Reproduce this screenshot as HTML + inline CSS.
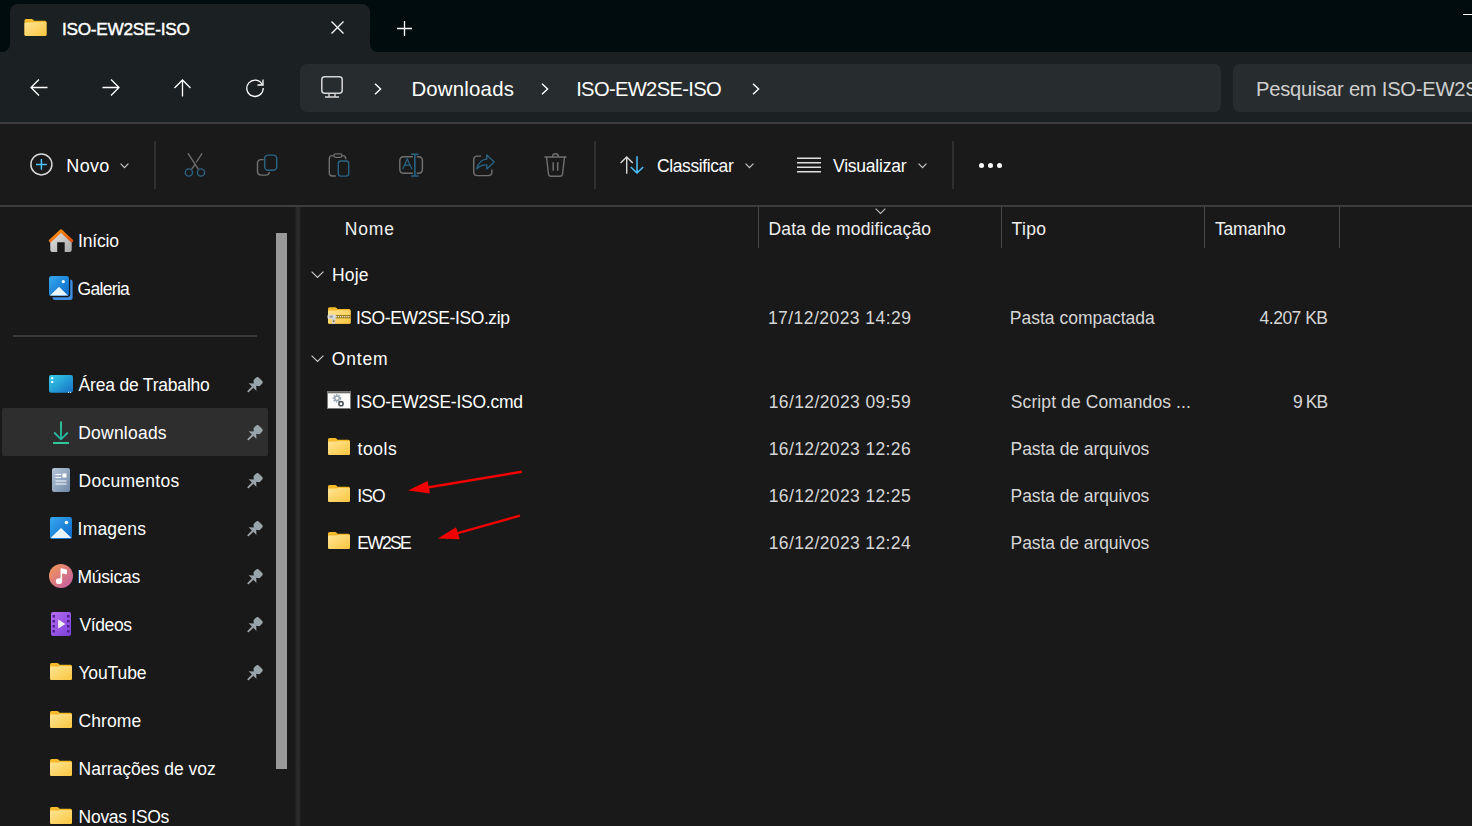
<!DOCTYPE html>
<html><head><meta charset="utf-8">
<style>
*{margin:0;padding:0;box-sizing:border-box}
html,body{width:1472px;height:826px;overflow:hidden;background:#191919;font-family:"Liberation Sans",sans-serif;color:#fff}
.a{position:absolute}
.t{position:absolute;white-space:nowrap;line-height:1}
svg{position:absolute;overflow:visible}
</style></head><body>
<svg width="0" height="0" style="left:0;top:0"><defs>
<linearGradient id="fb" x1="0" y1="0" x2="1" y2="1"><stop offset="0" stop-color="#ffe595"/><stop offset="1" stop-color="#f9c53f"/></linearGradient>
<linearGradient id="fk" x1="0" y1="0" x2="0" y2="1"><stop offset="0" stop-color="#f7bd2a"/><stop offset="1" stop-color="#eaa515"/></linearGradient>
<linearGradient id="gal" x1="0" y1="0" x2="1" y2="1"><stop offset="0" stop-color="#36a9f0"/><stop offset="1" stop-color="#0a67c4"/></linearGradient>
<linearGradient id="desk" x1="0" y1="0" x2="1" y2="1"><stop offset="0" stop-color="#35cfe6"/><stop offset="1" stop-color="#1670c6"/></linearGradient>
<linearGradient id="dl" x1="0" y1="0" x2="0" y2="1"><stop offset="0" stop-color="#2fd0a0"/><stop offset="1" stop-color="#1fb5a0"/></linearGradient>
<linearGradient id="doc" x1="0" y1="0" x2="1" y2="1"><stop offset="0" stop-color="#b6c7da"/><stop offset="1" stop-color="#6f87a6"/></linearGradient>
<linearGradient id="mus" x1="0" y1="0" x2="1" y2="1"><stop offset="0" stop-color="#f79a55"/><stop offset="1" stop-color="#c05aa8"/></linearGradient>
<linearGradient id="vid" x1="0" y1="0" x2="1" y2="1"><stop offset="0" stop-color="#b76ef0"/><stop offset="1" stop-color="#7b3ed8"/></linearGradient>
<linearGradient id="home" x1="0" y1="0" x2="1" y2="1"><stop offset="0" stop-color="#e6e6e6"/><stop offset="1" stop-color="#a9a9a9"/></linearGradient>
<linearGradient id="roof" x1="0" y1="0" x2="1" y2="1"><stop offset="0" stop-color="#ff9a10"/><stop offset="1" stop-color="#e0500a"/></linearGradient>
</defs></svg>

<div class="a" style="left:0px;top:0px;width:1472px;height:52px;background:#010c0f;border-radius:0px;"></div>
<div class="a" style="left:10px;top:4px;width:360px;height:60px;background:#1b2022;border-radius:8px;border-bottom-left-radius:0;border-bottom-right-radius:0"></div>
<div class="a" style="left:2px;top:44px;width:8px;height:8px;background:#1b2022"></div>
<div class="a" style="left:-6px;top:36px;width:16px;height:16px;background:#010c0f;border-radius:8px"></div>
<div class="a" style="left:370px;top:44px;width:8px;height:8px;background:#1b2022"></div>
<div class="a" style="left:370px;top:36px;width:16px;height:16px;background:#010c0f;border-radius:8px"></div>
<div class="a" style="left:0px;top:52px;width:1472px;height:70px;background:#1b2022;border-radius:0px;"></div>
<div class="a" style="left:0px;top:122px;width:1472px;height:2px;background:#3d3d3d;border-radius:0px;"></div>
<div class="a" style="left:0px;top:124px;width:1472px;height:81px;background:#1a1a1a;border-radius:0px;"></div>
<div class="a" style="left:0px;top:205px;width:1472px;height:2px;background:#3d3d3d;border-radius:0px;"></div>
<div class="a" style="left:300px;top:64px;width:921px;height:48px;background:#272c2e;border-radius:7px;"></div>
<div class="a" style="left:1233px;top:64px;width:260px;height:48px;background:#272c2e;border-radius:7px;"></div>
<div class="a" style="left:1463px;top:13.9px;width:9px;height:1.2px;background:#ffffff;border-radius:0px;"></div>
<svg style="left:24px;top:19px" width="23" height="17" viewBox="0 0 22 17"><path d="M0,1.6 Q0,0 1.6,0 H7.2 Q8,0 8.6,0.7 L9.6,1.8 H20.4 Q22,1.8 22,3.4 V15.4 Q22,17 20.4,17 H1.6 Q0,17 0,15.4 Z" fill="url(#fk)"/><path d="M0,4.6 Q0,3.4 1.2,3.4 H8.4 L9.8,3.1 H20.8 Q22,3.1 22,4.3 V15.6 Q22,17 20.6,17 H1.4 Q0,17 0,15.6 Z" fill="url(#fb)"/></svg>
<div class="t" id="tab" style="left:62.00px;top:21.04px;font-size:17.2px;color:#fff;font-weight:normal;-webkit-text-stroke:0.45px #fff;letter-spacing:-0.250px">ISO-EW2SE-ISO</div>
<svg style="left:331px;top:21px" width="13" height="13" viewBox="0 0 13 13"><path d="M0.5,0.5 L12.5,12.5 M12.5,0.5 L0.5,12.5" stroke="#fff" stroke-width="1.3"/></svg>
<svg style="left:397px;top:21px" width="15" height="15" viewBox="0 0 15 15"><path d="M7.5,0 V15 M0,7.5 H15" stroke="#fff" stroke-width="1.3"/></svg>
<svg style="left:30px;top:79px" width="18" height="17" viewBox="0 0 18 17"><path d="M17.5,8.5 H1 M9,0.5 L1,8.5 L9,16.5" stroke="#fff" stroke-width="1.3" fill="none"/></svg>
<svg style="left:102px;top:79px" width="18" height="17" viewBox="0 0 18 17"><path d="M0.5,8.5 H17 M9,0.5 L17,8.5 L9,16.5" stroke="#fff" stroke-width="1.3" fill="none"/></svg>
<svg style="left:174px;top:79px" width="17" height="18" viewBox="0 0 17 18"><path d="M8.5,17.5 V1 M0.5,9 L8.5,1 L16.5,9" stroke="#fff" stroke-width="1.3" fill="none"/></svg>
<svg style="left:246px;top:79px" width="18" height="18" viewBox="0 0 18 18"><path d="M16.3,5.5 A8.2,8.2 0 1 0 17.2,9" stroke="#fff" stroke-width="1.3" fill="none"/><path d="M17,0.5 V6 H11.5" stroke="#fff" stroke-width="1.3" fill="none"/></svg>
<svg style="left:321px;top:76px" width="22" height="22" viewBox="0 0 22 22"><rect x="0.8" y="0.8" width="20.4" height="16.4" rx="3" stroke="#d6d6d6" stroke-width="1.5" fill="none"/><path d="M8,17 V20.5 M14,17 V20.5 M4,21 H18" stroke="#d6d6d6" stroke-width="1.4" fill="none"/></svg>
<svg style="left:374px;top:83px" width="8" height="12" viewBox="0 0 8 12"><path d="M1,0.7 L6.6,6 L1,11.3" stroke="#fff" stroke-width="1.4" fill="none"/></svg>
<svg style="left:540.5px;top:83px" width="8" height="12" viewBox="0 0 8 12"><path d="M1,0.7 L6.6,6 L1,11.3" stroke="#fff" stroke-width="1.4" fill="none"/></svg>
<svg style="left:751.5px;top:83px" width="8" height="12" viewBox="0 0 8 12"><path d="M1,0.7 L6.6,6 L1,11.3" stroke="#fff" stroke-width="1.4" fill="none"/></svg>
<div class="t" id="bc1" style="left:411.40px;top:78.73px;font-size:20.4px;color:#fff;font-weight:normal;letter-spacing:0.200px">Downloads</div>
<div class="t" id="bc2" style="left:576.20px;top:78.90px;font-size:20.2px;color:#fff;font-weight:normal;letter-spacing:-0.683px">ISO-EW2SE-ISO</div>
<div class="t" id="srch" style="left:1256.00px;top:78.90px;font-size:20.2px;color:#d0d0d0;font-weight:normal;letter-spacing:-0.250px">Pesquisar em ISO-EW2SE-ISO</div>
<svg style="left:30px;top:153px" width="23" height="23" viewBox="0 0 23 23"><circle cx="11.4" cy="11.4" r="10.5" stroke="#d8d8d8" stroke-width="1.5" fill="none"/><path d="M11.4,6 V16.8 M6,11.4 H16.8" stroke="#4cc2ff" stroke-width="1.5"/></svg>
<div class="t" id="novo" style="left:66.30px;top:156.76px;font-size:18px;color:#fff;font-weight:normal;letter-spacing:0.333px">Novo</div>
<svg style="left:119.5px;top:162.5px" width="9" height="6" viewBox="0 0 9 6"><path d="M0.6,0.6 L4.5,4.6 L8.4,0.6" stroke="#c8c8c8" stroke-width="1.2" fill="none"/></svg>
<div class="a" style="left:154px;top:141px;width:2px;height:48px;background:#2f2f2f;border-radius:0px;"></div>
<svg style="left:185px;top:153px" width="22" height="24" viewBox="0 0 22 24"><path d="M3.2,0.6 L13.1,15.8 M16.8,0.8 L11.4,9 M10.2,11.2 L6.9,15.8" stroke="#707070" stroke-width="1.35" fill="none" stroke-linecap="round"/><circle cx="3.9" cy="19.5" r="3.6" stroke="#2a6485" stroke-width="1.4" fill="none"/><circle cx="16" cy="19.5" r="3.6" stroke="#2a6485" stroke-width="1.4" fill="none"/></svg>
<svg style="left:257px;top:154px" width="22" height="22" viewBox="0 0 22 22"><path d="M6.6,5.6 H4.2 Q0.5,5.6 0.5,9.3 V17.6 Q0.5,21.1 4.2,21.1 H8.6 Q12.3,21.1 12.3,18" stroke="#707070" stroke-width="1.45" fill="none"/><rect x="7.7" y="1.1" width="12" height="15.1" rx="3.4" stroke="#2a6485" stroke-width="1.45" fill="none"/></svg>
<svg style="left:328px;top:153px" width="22" height="24" viewBox="0 0 22 24"><path d="M7.8,23 H4.3 Q1.3,23 1.3,20 V5.6 Q1.3,2.6 4.3,2.6 H5.8 M14,2.6 H14.7 Q17.7,2.6 17.7,5.6 V6.3" stroke="#707070" stroke-width="1.4" fill="none"/><rect x="5.8" y="0.8" width="8.2" height="3.6" rx="1.8" stroke="#707070" stroke-width="1.3" fill="none"/><rect x="10.3" y="8" width="10.4" height="15.1" rx="2.6" stroke="#2a6485" stroke-width="1.4" fill="none"/></svg>
<svg style="left:399px;top:153px" width="25" height="24" viewBox="0 0 25 24"><path d="M13.9,3.8 H4.8 Q0.8,3.8 0.8,7.8 V16.2 Q0.8,20.2 4.8,20.2 H13.9 M17.8,3.8 H19.4 Q23.4,3.8 23.4,7.8 V16.2 Q23.4,20.2 19.4,20.2 H17.8" stroke="#707070" stroke-width="1.45" fill="none"/><path d="M3.6,16.2 L8.3,6 L13,16.2 M5.4,12.2 H11.2" stroke="#2a6485" stroke-width="1.25" fill="none"/><path d="M15.8,1.2 V23 M12.1,1.3 H19.5 M12.1,23 H19.5" stroke="#2a6485" stroke-width="1.6" fill="none"/></svg>
<svg style="left:473px;top:153px" width="22" height="24" viewBox="0 0 22 24"><path d="M8.2,3.1 H4.6 Q0.7,3.1 0.7,7 V18.7 Q0.7,22.6 4.6,22.6 H15 Q18.9,22.6 18.9,18.7 V16.4" stroke="#707070" stroke-width="1.45" fill="none"/><path d="M3.9,15.8 Q5.8,7 13.7,6.2 V2 L21.2,9 L13.8,15.9 V11.9 Q8.2,11.5 3.9,15.8 Z" stroke="#2a6485" stroke-width="1.35" fill="none" stroke-linejoin="round"/></svg>
<svg style="left:543.6px;top:153px" width="23" height="24" viewBox="0 0 23 24"><path d="M0.5,4 H22.5 M8.5,4 Q8.5,0.7 11.5,0.7 Q14.5,0.7 14.5,4" stroke="#707070" stroke-width="1.4" fill="none"/><path d="M2.5,4 L4.5,21 Q4.8,23.3 7,23.3 H16 Q18.2,23.3 18.5,21 L20.5,4" stroke="#707070" stroke-width="1.4" fill="none"/><path d="M9.2,9.3 V17.7 M13.7,9.3 V17.7" stroke="#707070" stroke-width="1.5"/></svg>
<div class="a" style="left:594px;top:141px;width:2px;height:48px;background:#2f2f2f;border-radius:0px;"></div>
<svg style="left:620px;top:155px" width="24" height="19" viewBox="0 0 24 19"><path d="M6.7,18.8 V2.2 M0.6,8 L6.7,1.9 L12.8,8" stroke="#d8d8d8" stroke-width="1.4" fill="none"/><path d="M17,1.3 V17.8 M10.8,12 L17,18 L23.2,12" stroke="#4cc2ff" stroke-width="1.5" fill="none"/></svg>
<div class="t" id="cls" style="left:657.00px;top:157.79px;font-size:17.5px;color:#fff;font-weight:normal;letter-spacing:-0.400px">Classificar</div>
<svg style="left:744.5px;top:162.5px" width="9" height="6" viewBox="0 0 9 6"><path d="M0.6,0.6 L4.5,4.6 L8.4,0.6" stroke="#c8c8c8" stroke-width="1.2" fill="none"/></svg>
<svg style="left:797px;top:157px" width="24" height="16" viewBox="0 0 24 16"><path d="M0,1.3 H24 M0,5.8 H24 M0,10.3 H24 M0,14.8 H24" stroke="#e0e0e0" stroke-width="1.4"/></svg>
<div class="t" id="vis" style="left:833.00px;top:157.79px;font-size:17.5px;color:#fff;font-weight:normal;letter-spacing:-0.222px">Visualizar</div>
<svg style="left:917.5px;top:162.5px" width="9" height="6" viewBox="0 0 9 6"><path d="M0.6,0.6 L4.5,4.6 L8.4,0.6" stroke="#c8c8c8" stroke-width="1.2" fill="none"/></svg>
<div class="a" style="left:952px;top:141px;width:2px;height:48px;background:#2f2f2f;border-radius:0px;"></div>
<div class="a" style="left:978.5px;top:163.3px;width:5px;height:5px;border-radius:3px;background:#fff"></div>
<div class="a" style="left:987.5px;top:163.3px;width:5px;height:5px;border-radius:3px;background:#fff"></div>
<div class="a" style="left:996.5px;top:163.3px;width:5px;height:5px;border-radius:3px;background:#fff"></div>
<div class="t" id="h_nome" style="left:344.70px;top:221.19px;font-size:17.5px;color:#f0f0f0;font-weight:normal;letter-spacing:0.866px">Nome</div>
<div class="t" id="h_data" style="left:768.50px;top:221.19px;font-size:17.5px;color:#f0f0f0;font-weight:normal;letter-spacing:0.167px">Data de modificação</div>
<div class="t" id="h_tipo" style="left:1011.60px;top:221.19px;font-size:17.5px;color:#f0f0f0;font-weight:normal;letter-spacing:0.333px">Tipo</div>
<div class="t" id="h_tam" style="left:1215.00px;top:221.19px;font-size:17.5px;color:#f0f0f0;font-weight:normal;letter-spacing:-0.201px">Tamanho</div>
<div class="a" style="left:758px;top:207px;width:1px;height:41px;background:#4a4a4a;border-radius:0px;"></div>
<div class="a" style="left:1001px;top:207px;width:1px;height:41px;background:#4a4a4a;border-radius:0px;"></div>
<div class="a" style="left:1204px;top:207px;width:1px;height:41px;background:#4a4a4a;border-radius:0px;"></div>
<div class="a" style="left:1339px;top:207px;width:1px;height:41px;background:#4a4a4a;border-radius:0px;"></div>
<svg style="left:875px;top:208px" width="11" height="6" viewBox="0 0 11 6"><path d="M0.6,0.6 L5.5,5.4 L10.4,0.6" stroke="#bdbdbd" stroke-width="1.1" fill="none"/></svg>
<svg style="left:311px;top:270.5px" width="13" height="7" viewBox="0 0 13 7"><path d="M0.6,0.6 L6.5,6.4 L12.4,0.6" stroke="#c8c8c8" stroke-width="1.2" fill="none"/></svg>
<div class="t" id="g_hoje" style="left:332.00px;top:266.69px;font-size:17.5px;color:#fff;font-weight:normal;letter-spacing:0.199px">Hoje</div>
<svg style="left:311px;top:354.5px" width="13" height="7" viewBox="0 0 13 7"><path d="M0.6,0.6 L6.5,6.4 L12.4,0.6" stroke="#c8c8c8" stroke-width="1.2" fill="none"/></svg>
<div class="t" id="g_ontem" style="left:331.70px;top:351.19px;font-size:17.5px;color:#fff;font-weight:normal;letter-spacing:0.850px">Ontem</div>
<div class="t" id="n_zip" style="left:355.90px;top:309.69px;font-size:17.5px;color:#fff;font-weight:normal;letter-spacing:-0.401px">ISO-EW2SE-ISO.zip</div>
<div class="t" id="d_zip" style="left:767.90px;top:309.69px;font-size:17.5px;color:#d6d6d6;font-weight:normal;letter-spacing:0.454px">17/12/2023 14:29</div>
<div class="t" id="t_zip" style="left:1009.80px;top:309.69px;font-size:17.5px;color:#d6d6d6;font-weight:normal;letter-spacing:0.001px">Pasta compactada</div>
<div class="t" id="s_zip" style="right:144.50px;top:309.69px;font-size:17.5px;color:#d6d6d6;letter-spacing:-0.514px">4.207 KB</div>
<div class="t" id="n_cmd" style="left:355.90px;top:394.19px;font-size:17.5px;color:#fff;font-weight:normal;letter-spacing:-0.252px">ISO-EW2SE-ISO.cmd</div>
<div class="t" id="d_cmd" style="left:768.70px;top:394.19px;font-size:17.5px;color:#d6d6d6;font-weight:normal;letter-spacing:0.386px">16/12/2023 09:59</div>
<div class="t" id="t_cmd" style="left:1010.80px;top:394.19px;font-size:17.5px;color:#d6d6d6;font-weight:normal;letter-spacing:0.095px">Script de Comandos ...</div>
<div class="t" id="s_cmd" style="right:144.70px;top:394.19px;font-size:17.5px;color:#d6d6d6;letter-spacing:-0.935px">9 KB</div>
<div class="t" id="n_tools" style="left:357.50px;top:440.99px;font-size:17.5px;color:#fff;font-weight:normal;letter-spacing:0.550px">tools</div>
<div class="t" id="d_tools" style="left:768.70px;top:440.99px;font-size:17.5px;color:#d6d6d6;font-weight:normal;letter-spacing:0.386px">16/12/2023 12:26</div>
<div class="t" id="t_tools" style="left:1010.60px;top:440.99px;font-size:17.5px;color:#d6d6d6;font-weight:normal;letter-spacing:-0.088px">Pasta de arquivos</div>
<div class="t" id="n_iso" style="left:357.30px;top:487.99px;font-size:17.5px;color:#fff;font-weight:normal;letter-spacing:-0.900px">ISO</div>
<div class="t" id="d_iso" style="left:768.70px;top:487.99px;font-size:17.5px;color:#d6d6d6;font-weight:normal;letter-spacing:0.386px">16/12/2023 12:25</div>
<div class="t" id="t_iso" style="left:1010.60px;top:487.99px;font-size:17.5px;color:#d6d6d6;font-weight:normal;letter-spacing:-0.088px">Pasta de arquivos</div>
<div class="t" id="n_ew" style="left:357.30px;top:534.99px;font-size:17.5px;color:#fff;font-weight:normal;letter-spacing:-1.700px">EW2SE</div>
<div class="t" id="d_ew" style="left:768.70px;top:534.99px;font-size:17.5px;color:#d6d6d6;font-weight:normal;letter-spacing:0.385px">16/12/2023 12:24</div>
<div class="t" id="t_ew" style="left:1010.60px;top:534.99px;font-size:17.5px;color:#d6d6d6;font-weight:normal;letter-spacing:-0.088px">Pasta de arquivos</div>
<svg style="left:327.5px;top:307px" width="22.6" height="17" viewBox="0 0 23 17"><path d="M0,1.6 Q0,0 1.6,0 H7.2 Q8,0 8.6,0.7 L9.6,1.8 H21.4 Q23,1.8 23,3.4 V15.4 Q23,17 21.4,17 H1.6 Q0,17 0,15.4 Z" fill="url(#fk)"/><path d="M0,4.6 Q0,3.4 1.2,3.4 H8.4 L9.8,3.1 H21.8 Q23,3.1 23,4.3 V15.6 Q23,17 21.6,17 H1.4 Q0,17 0,15.6 Z" fill="url(#fb)"/><rect x="7.5" y="8" width="15.5" height="3.4" fill="#9c7a1e"/><path d="M8,9.7 H22.5" stroke="#f3eee0" stroke-width="1.2" stroke-dasharray="1.2 0.9"/><rect x="-0.5" y="7.5" width="8.5" height="4.5" rx="1.5" fill="#dcdcdc"/><rect x="1.5" y="8.7" width="3.5" height="2" fill="#9a9a9a"/><rect x="4" y="11.5" width="3.5" height="5.5" fill="#cfcfcf"/><rect x="5" y="13.5" width="1.6" height="1.6" fill="#8a6d1c"/></svg>
<svg style="left:327px;top:391px" width="24" height="18" viewBox="0 0 24 18"><rect x="0.5" y="0.5" width="23" height="17" fill="#fbfbfb" stroke="#7c7a77" stroke-width="1"/><rect x="1" y="1" width="22" height="1.3" fill="#6b6966"/><circle cx="10" cy="7.3" r="3.2" fill="none" stroke="#9aa6b2" stroke-width="2.2" stroke-dasharray="1.4 0.9"/><circle cx="10" cy="7.3" r="2.2" fill="none" stroke="#9aa6b2" stroke-width="1.4"/><circle cx="14" cy="12.7" r="2.1" fill="none" stroke="#4d545a" stroke-width="1.6"/></svg>
<svg style="left:328px;top:438px" width="22" height="17" viewBox="0 0 22 17"><path d="M0,1.6 Q0,0 1.6,0 H7.2 Q8,0 8.6,0.7 L9.6,1.8 H20.4 Q22,1.8 22,3.4 V15.4 Q22,17 20.4,17 H1.6 Q0,17 0,15.4 Z" fill="url(#fk)"/><path d="M0,4.6 Q0,3.4 1.2,3.4 H8.4 L9.8,3.1 H20.8 Q22,3.1 22,4.3 V15.6 Q22,17 20.6,17 H1.4 Q0,17 0,15.6 Z" fill="url(#fb)"/></svg>
<svg style="left:328px;top:485px" width="22" height="17" viewBox="0 0 22 17"><path d="M0,1.6 Q0,0 1.6,0 H7.2 Q8,0 8.6,0.7 L9.6,1.8 H20.4 Q22,1.8 22,3.4 V15.4 Q22,17 20.4,17 H1.6 Q0,17 0,15.4 Z" fill="url(#fk)"/><path d="M0,4.6 Q0,3.4 1.2,3.4 H8.4 L9.8,3.1 H20.8 Q22,3.1 22,4.3 V15.6 Q22,17 20.6,17 H1.4 Q0,17 0,15.6 Z" fill="url(#fb)"/></svg>
<svg style="left:328px;top:532px" width="22" height="17" viewBox="0 0 22 17"><path d="M0,1.6 Q0,0 1.6,0 H7.2 Q8,0 8.6,0.7 L9.6,1.8 H20.4 Q22,1.8 22,3.4 V15.4 Q22,17 20.4,17 H1.6 Q0,17 0,15.4 Z" fill="url(#fk)"/><path d="M0,4.6 Q0,3.4 1.2,3.4 H8.4 L9.8,3.1 H20.8 Q22,3.1 22,4.3 V15.6 Q22,17 20.6,17 H1.4 Q0,17 0,15.6 Z" fill="url(#fb)"/></svg>
<svg style="left:0;top:0" width="1472" height="826"><line x1="521.8" y1="471.7" x2="418.4" y2="488.95000000000005" stroke="#f00000" stroke-width="2.4"/><polygon points="408,490.6 427.6,481 430,493.6" fill="#f00000"/></svg>
<svg style="left:0;top:0" width="1472" height="826"><line x1="520" y1="515.6" x2="447.85" y2="535.875" stroke="#f00000" stroke-width="2.4"/><polygon points="437.8,538.5 456,527.3 459.8,539.2" fill="#f00000"/></svg>
<div class="a" style="left:2px;top:408px;width:266px;height:47.5px;background:#2e2e2e;border-radius:2px;"></div>
<div class="a" style="left:13px;top:335px;width:244px;height:2px;background:#3a3a3a;border-radius:0px;"></div>
<div class="a" style="left:276px;top:233px;width:11px;height:536px;background:#999999;border-radius:0px;"></div>
<div class="a" style="left:294.5px;top:207px;width:6px;height:619px;background:linear-gradient(90deg,#1d1d1d,#2c2c2c 40%,#2c2c2c 60%,#1d1d1d);border-radius:0px;"></div>
<div class="t" id="sb0" style="left:78.00px;top:232.99px;font-size:17.5px;color:#fff;font-weight:normal;letter-spacing:-0.160px">Início</div>
<div class="t" id="sb1" style="left:77.60px;top:280.99px;font-size:17.5px;color:#fff;font-weight:normal;letter-spacing:-0.698px">Galeria</div>
<div class="t" id="sb2" style="left:78.60px;top:376.99px;font-size:17.5px;color:#fff;font-weight:normal;letter-spacing:-0.200px">Área de Trabalho</div>
<div class="t" id="sb3" style="left:78.20px;top:424.99px;font-size:17.5px;color:#fff;font-weight:normal;letter-spacing:0.229px">Downloads</div>
<div class="t" id="sb4" style="left:78.60px;top:472.99px;font-size:17.5px;color:#fff;font-weight:normal;letter-spacing:0.265px">Documentos</div>
<div class="t" id="sb5" style="left:77.60px;top:520.99px;font-size:17.5px;color:#fff;font-weight:normal;letter-spacing:0.202px">Imagens</div>
<div class="t" id="sb6" style="left:77.40px;top:568.99px;font-size:17.5px;color:#fff;font-weight:normal;letter-spacing:-0.232px">Músicas</div>
<div class="t" id="sb7" style="left:79.40px;top:616.99px;font-size:17.5px;color:#fff;font-weight:normal;letter-spacing:-0.360px">Vídeos</div>
<div class="t" id="sb8" style="left:78.40px;top:664.99px;font-size:17.5px;color:#fff;font-weight:normal;letter-spacing:-0.101px">YouTube</div>
<div class="t" id="sb9" style="left:78.40px;top:712.99px;font-size:17.5px;color:#fff;font-weight:normal;letter-spacing:0.120px">Chrome</div>
<div class="t" id="sb10" style="left:78.60px;top:760.99px;font-size:17.5px;color:#fff;font-weight:normal;letter-spacing:0.000px">Narrações de voz</div>
<div class="t" id="sb11" style="left:78.60px;top:808.99px;font-size:17.5px;color:#fff;font-weight:normal;letter-spacing:-0.291px">Novas ISOs</div>
<svg style="left:0;top:0" width="1" height="1"><g transform="translate(252.7,387) rotate(45)"><path d="M-5.5,0.2 L5.5,0.2 L1.7,-3.3 L4.3,-5.4 V-8.8 Q4.3,-11 2.2,-11 H-2.2 Q-4.3,-11 -4.3,-8.8 V-5.4 L-1.7,-3.3 Z" fill="#9aa4ab"/><path d="M0,0 V6.2" stroke="#9aa4ab" stroke-width="1.8" stroke-linecap="round"/></g></svg>
<svg style="left:0;top:0" width="1" height="1"><g transform="translate(252.7,435) rotate(45)"><path d="M-5.5,0.2 L5.5,0.2 L1.7,-3.3 L4.3,-5.4 V-8.8 Q4.3,-11 2.2,-11 H-2.2 Q-4.3,-11 -4.3,-8.8 V-5.4 L-1.7,-3.3 Z" fill="#9aa4ab"/><path d="M0,0 V6.2" stroke="#9aa4ab" stroke-width="1.8" stroke-linecap="round"/></g></svg>
<svg style="left:0;top:0" width="1" height="1"><g transform="translate(252.7,483) rotate(45)"><path d="M-5.5,0.2 L5.5,0.2 L1.7,-3.3 L4.3,-5.4 V-8.8 Q4.3,-11 2.2,-11 H-2.2 Q-4.3,-11 -4.3,-8.8 V-5.4 L-1.7,-3.3 Z" fill="#9aa4ab"/><path d="M0,0 V6.2" stroke="#9aa4ab" stroke-width="1.8" stroke-linecap="round"/></g></svg>
<svg style="left:0;top:0" width="1" height="1"><g transform="translate(252.7,531) rotate(45)"><path d="M-5.5,0.2 L5.5,0.2 L1.7,-3.3 L4.3,-5.4 V-8.8 Q4.3,-11 2.2,-11 H-2.2 Q-4.3,-11 -4.3,-8.8 V-5.4 L-1.7,-3.3 Z" fill="#9aa4ab"/><path d="M0,0 V6.2" stroke="#9aa4ab" stroke-width="1.8" stroke-linecap="round"/></g></svg>
<svg style="left:0;top:0" width="1" height="1"><g transform="translate(252.7,579) rotate(45)"><path d="M-5.5,0.2 L5.5,0.2 L1.7,-3.3 L4.3,-5.4 V-8.8 Q4.3,-11 2.2,-11 H-2.2 Q-4.3,-11 -4.3,-8.8 V-5.4 L-1.7,-3.3 Z" fill="#9aa4ab"/><path d="M0,0 V6.2" stroke="#9aa4ab" stroke-width="1.8" stroke-linecap="round"/></g></svg>
<svg style="left:0;top:0" width="1" height="1"><g transform="translate(252.7,627) rotate(45)"><path d="M-5.5,0.2 L5.5,0.2 L1.7,-3.3 L4.3,-5.4 V-8.8 Q4.3,-11 2.2,-11 H-2.2 Q-4.3,-11 -4.3,-8.8 V-5.4 L-1.7,-3.3 Z" fill="#9aa4ab"/><path d="M0,0 V6.2" stroke="#9aa4ab" stroke-width="1.8" stroke-linecap="round"/></g></svg>
<svg style="left:0;top:0" width="1" height="1"><g transform="translate(252.7,675) rotate(45)"><path d="M-5.5,0.2 L5.5,0.2 L1.7,-3.3 L4.3,-5.4 V-8.8 Q4.3,-11 2.2,-11 H-2.2 Q-4.3,-11 -4.3,-8.8 V-5.4 L-1.7,-3.3 Z" fill="#9aa4ab"/><path d="M0,0 V6.2" stroke="#9aa4ab" stroke-width="1.8" stroke-linecap="round"/></g></svg>
<svg style="left:49px;top:229px" width="24" height="23" viewBox="0 0 24 23"><path d="M1.3,11.5 L12,2.2 L22.7,11.5 V21 Q22.7,23 20.7,23 H15.7 V13.3 H8.2 V23 H3.3 Q1.3,23 1.3,21 Z" fill="url(#home)"/><path d="M1.2,11.8 L12,1.8 L22.8,11.8" stroke="url(#roof)" stroke-width="3" fill="none" stroke-linejoin="round" stroke-linecap="round"/></svg>
<svg style="left:49px;top:276px" width="24" height="24" viewBox="0 0 24 24"><rect x="3.6" y="3.6" width="20" height="20.4" rx="2.5" fill="#3f8fe0"/><rect x="-0.2" y="-0.2" width="21.4" height="21.4" rx="3" fill="#191919"/><rect x="0" y="0" width="20" height="20" rx="2.5" fill="url(#gal)"/><path d="M1,19.5 L10,10.7 L19,19.5 Z" fill="#eaf6ff"/><circle cx="14.3" cy="5.6" r="1.6" fill="#fff"/></svg>
<svg style="left:49px;top:375px" width="24" height="18" viewBox="0 0 24 18"><rect x="0" y="0" width="24" height="17.7" rx="2.2" fill="url(#desk)"/><rect x="2.2" y="2.2" width="2" height="2" fill="#fff"/><rect x="2.2" y="6" width="2" height="2" fill="#fff"/><rect x="19" y="16.8" width="1" height="1" fill="#fff"/><rect x="21" y="16.8" width="1" height="1" fill="#fff"/></svg>
<svg style="left:53px;top:421px" width="16" height="24" viewBox="0 0 16 24"><path d="M8,0.5 V18 M1.2,11.5 L8,18.3 L14.8,11.5" stroke="url(#dl)" stroke-width="1.8" fill="none"/><path d="M0,22 H16" stroke="#2fc89c" stroke-width="2"/></svg>
<svg style="left:52px;top:468px" width="18" height="24" viewBox="0 0 18 24"><rect x="0" y="0" width="18" height="24" rx="2" fill="url(#doc)"/><path d="M3.5,6.5 H9 M3.5,9.5 H9 M3.5,13 H14.5 M3.5,16 H14.5" stroke="#fff" stroke-width="1.2"/><rect x="10.5" y="5.5" width="4" height="4" fill="#fff"/></svg>
<svg style="left:50px;top:517px" width="22" height="22" viewBox="0 0 22 22"><rect x="0" y="0" width="22" height="22" rx="2.2" fill="url(#gal)"/><path d="M0.5,21 L11,11 L21.5,21 Z" fill="#eaf6ff"/><circle cx="16.5" cy="5.5" r="1.8" fill="#fff"/></svg>
<svg style="left:49px;top:564px" width="24" height="24" viewBox="0 0 24 24"><circle cx="12" cy="12" r="12" fill="url(#mus)"/><ellipse cx="10" cy="17.2" rx="3.1" ry="2.9" fill="#fff"/><path d="M12.3,17 V5 L17.2,6.3 V9.6 L12.9,8.5" fill="#fff" stroke="#fff" stroke-width="1.5" stroke-linejoin="round"/></svg>
<svg style="left:51px;top:612px" width="20" height="24" viewBox="0 0 20 24"><rect x="0" y="0" width="20" height="24" rx="2" fill="url(#vid)"/><rect x="1.5" y="3" width="2.5" height="2.5" fill="#4d2290"/><rect x="16" y="3" width="2.5" height="2.5" fill="#4d2290"/><rect x="1.5" y="8" width="2.5" height="2.5" fill="#4d2290"/><rect x="16" y="8" width="2.5" height="2.5" fill="#4d2290"/><rect x="1.5" y="13" width="2.5" height="2.5" fill="#4d2290"/><rect x="16" y="13" width="2.5" height="2.5" fill="#4d2290"/><rect x="1.5" y="18" width="2.5" height="2.5" fill="#4d2290"/><rect x="16" y="18" width="2.5" height="2.5" fill="#4d2290"/><path d="M7.2,7.5 L14.3,12 L7.2,16.5 Z" fill="#f2f2f2"/></svg>
<svg style="left:50px;top:663px" width="22" height="17" viewBox="0 0 22 17"><path d="M0,1.6 Q0,0 1.6,0 H7.2 Q8,0 8.6,0.7 L9.6,1.8 H20.4 Q22,1.8 22,3.4 V15.4 Q22,17 20.4,17 H1.6 Q0,17 0,15.4 Z" fill="url(#fk)"/><path d="M0,4.6 Q0,3.4 1.2,3.4 H8.4 L9.8,3.1 H20.8 Q22,3.1 22,4.3 V15.6 Q22,17 20.6,17 H1.4 Q0,17 0,15.6 Z" fill="url(#fb)"/></svg>
<svg style="left:50px;top:711px" width="22" height="17" viewBox="0 0 22 17"><path d="M0,1.6 Q0,0 1.6,0 H7.2 Q8,0 8.6,0.7 L9.6,1.8 H20.4 Q22,1.8 22,3.4 V15.4 Q22,17 20.4,17 H1.6 Q0,17 0,15.4 Z" fill="url(#fk)"/><path d="M0,4.6 Q0,3.4 1.2,3.4 H8.4 L9.8,3.1 H20.8 Q22,3.1 22,4.3 V15.6 Q22,17 20.6,17 H1.4 Q0,17 0,15.6 Z" fill="url(#fb)"/></svg>
<svg style="left:50px;top:759px" width="22" height="17" viewBox="0 0 22 17"><path d="M0,1.6 Q0,0 1.6,0 H7.2 Q8,0 8.6,0.7 L9.6,1.8 H20.4 Q22,1.8 22,3.4 V15.4 Q22,17 20.4,17 H1.6 Q0,17 0,15.4 Z" fill="url(#fk)"/><path d="M0,4.6 Q0,3.4 1.2,3.4 H8.4 L9.8,3.1 H20.8 Q22,3.1 22,4.3 V15.6 Q22,17 20.6,17 H1.4 Q0,17 0,15.6 Z" fill="url(#fb)"/></svg>
<svg style="left:50px;top:807px" width="22" height="17" viewBox="0 0 22 17"><path d="M0,1.6 Q0,0 1.6,0 H7.2 Q8,0 8.6,0.7 L9.6,1.8 H20.4 Q22,1.8 22,3.4 V15.4 Q22,17 20.4,17 H1.6 Q0,17 0,15.4 Z" fill="url(#fk)"/><path d="M0,4.6 Q0,3.4 1.2,3.4 H8.4 L9.8,3.1 H20.8 Q22,3.1 22,4.3 V15.6 Q22,17 20.6,17 H1.4 Q0,17 0,15.6 Z" fill="url(#fb)"/></svg>
</body></html>
